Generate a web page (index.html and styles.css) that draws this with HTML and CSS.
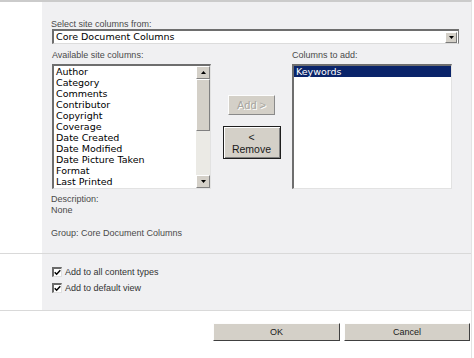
FILE: index.html
```html
<!DOCTYPE html>
<html>
<head>
<meta charset="utf-8">
<link rel="stylesheet" href="styles.css">
</head>
<body>
<div class="page">
  <div class="band band-main">
    <div class="gutter"></div>
    <div class="panel panel-main">
      <div class="label">Select site columns from:</div>
      <div class="select">
        <span class="select-text">Core Document Columns</span>
        <span class="drop"><svg width="5" height="3" viewBox="0 0 5 3"><path d="M0 0H5L2.5 3Z" fill="#000"/></svg></span>
      </div>
      <div class="picker">
        <div class="col">
          <div class="label">Available site columns:</div>
          <div class="listbox">
            <div class="items">
              <div class="item">Author</div>
              <div class="item">Category</div>
              <div class="item">Comments</div>
              <div class="item">Contributor</div>
              <div class="item">Copyright</div>
              <div class="item">Coverage</div>
              <div class="item">Date Created</div>
              <div class="item">Date Modified</div>
              <div class="item">Date Picture Taken</div>
              <div class="item">Format</div>
              <div class="item">Last Printed</div>
              <div class="item">Publisher</div>
            </div>
            <div class="scrollbar">
              <div class="sb-btn"><svg width="5" height="3" viewBox="0 0 5 3"><path d="M0 3H5L2.5 0Z" fill="#000"/></svg></div>
              <div class="sb-thumb"></div>
              <div class="sb-track"></div>
              <div class="sb-btn"><svg width="5" height="3" viewBox="0 0 5 3"><path d="M0 0H5L2.5 3Z" fill="#000"/></svg></div>
            </div>
          </div>
        </div>
        <div class="actions">
          <button class="btn btn-add" disabled>Add &gt;</button>
          <button class="btn btn-remove">&lt;<br>Remove</button>
        </div>
        <div class="col">
          <div class="label">Columns to add:</div>
          <div class="listbox listbox-right">
            <div class="items">
              <div class="item selected">Keywords</div>
            </div>
          </div>
        </div>
      </div>
      <div class="meta">Description:<br>None</div>
      <div class="meta meta-group">Group: Core Document Columns</div>
    </div>
  </div>
  <div class="sep"></div>
  <div class="band band-options">
    <div class="gutter"></div>
    <div class="panel panel-options">
      <div class="check"><span class="box"><svg width="8" height="7" viewBox="0 0 8 7"><path d="M0.8 3.2L3 5.5L7.2 1" fill="none" stroke="#000" stroke-width="1.7"/></svg></span>Add to all content types</div>
      <div class="check"><span class="box"><svg width="8" height="7" viewBox="0 0 8 7"><path d="M0.8 3.2L3 5.5L7.2 1" fill="none" stroke="#000" stroke-width="1.7"/></svg></span>Add to default view</div>
    </div>
  </div>
  <div class="sep"></div>
  <div class="footer">
    <button class="btn btn-wide">OK</button>
    <button class="btn btn-wide">Cancel</button>
  </div>
</div>
</body>
</html>
```
FILE: styles.css
```css
* { box-sizing: border-box; }
body {
  margin: 0;
  background: #fff;
  font-family: "Liberation Sans", Arial, sans-serif;
}
.page {
  width: 472px;
  height: 358px;
  border-top: 2px solid #cbcbcb;
  border-right: 1px solid #e3e3e3;
}
.band { display: flex; }
.band-main { height: 251px; }
.band-options { height: 56px; }
.gutter { width: 42px; flex: none; }
.panel { flex: 1; background: #f0f0f2; }
.sep { height: 1px; background: #d9d9d9; }

.panel-main { padding: 17px 0 0 9px; }
.label {
  font-size: 9px;
  line-height: 10px;
  color: #4a4a4a;
  white-space: nowrap;
}
.select {
  margin-left: 1px;
  width: 407px;
  height: 15px;
  background: #fff;
  border-top: 2px solid #6e6e6e;
  border-left: 2px solid #6e6e6e;
  border-right: 1px solid #7c7c7c;
  border-bottom: 1px solid #dcdcdc;
  display: flex;
  align-items: center;
  justify-content: space-between;
  padding: 0 0 0 2px;
}
.select-text {
  font-family: "DejaVu Sans", Verdana, sans-serif;
  font-size: 9.5px;
  line-height: 12px;
  color: #000;
}
.drop {
  width: 12px;
  height: 11px;
  background: #d4d0c8;
  border-top: 1px solid #fff;
  border-left: 1px solid #fff;
  border-right: 1px solid #7a7a7a;
  border-bottom: 1px solid #7a7a7a;
  display: flex;
  align-items: center;
  justify-content: center;
  margin-right: 1px;
}
.drop svg { display: block; }

.picker {
  margin-top: 6px;
  margin-left: 1px;
  display: grid;
  grid-template-columns: 159px 81px 160px;
}
.col .label { margin-bottom: 4px; }
.listbox {
  height: 125px;
  background: #fff;
  border-top: 2px solid #6e6e6e;
  border-left: 2px solid #6e6e6e;
  border-right: 1px solid #e2e2e2;
  border-bottom: 1px solid #e2e2e2;
  display: flex;
  overflow: hidden;
}
.items {
  flex: 1;
  overflow: hidden;
  font-family: "DejaVu Sans", Verdana, sans-serif;
  font-size: 9.5px;
  line-height: 11px;
  color: #000;
}
.item { padding-left: 2px; white-space: nowrap; }
.listbox-right .items { padding-top: 0; }
.item.selected {
  background: #0a246a;
  color: #fff;
}
.scrollbar {
  width: 14px;
  flex: none;
  display: flex;
  flex-direction: column;
  background: #ebeae5;
}
.sb-btn, .sb-thumb {
  background: #d4d0c8;
  border-top: 1px solid #fff;
  border-left: 1px solid #fff;
  border-right: 1px solid #808080;
  border-bottom: 1px solid #808080;
}
.sb-btn {
  height: 13px;
  flex: none;
  display: flex;
  align-items: center;
  justify-content: center;
}
.sb-btn svg { display: block; }
.sb-thumb { height: 52px; flex: none; }
.sb-track { flex: 1; }

.actions {
  display: flex;
  flex-direction: column;
  align-items: center;
  padding-top: 45px;
  gap: 11px;
}
.btn {
  font-family: "Liberation Sans", Arial, sans-serif;
  background: #d4d0c8;
  border-top: 1px solid #fdfdfd;
  border-left: 1px solid #fdfdfd;
  border-right: 1px solid #404040;
  border-bottom: 1px solid #404040;
  padding: 0;
  margin: 0;
  color: #1a1a1a;
  border-radius: 0;
}
.btn-add {
  width: 47px;
  height: 20px;
  font-size: 11px;
  color: #a8a6a0;
  text-shadow: 1px 1px 0 #fff;
  border-right-color: #8a8a8a;
  border-bottom-color: #8a8a8a;
}
.btn-remove {
  width: 58px;
  height: 33px;
  font-size: 10.5px;
  line-height: 12px;
  border: 1px solid #1e1e1e;
  box-shadow: inset 1px 1px 0 #fff, inset -1px -1px 0 #808080;
}

.meta {
  margin-top: 5px;
  font-size: 9px;
  line-height: 11px;
  color: #4a4a4a;
}
.meta-group { margin-top: 12px; }

.panel-options {
  padding: 10px 0 0 10px;
}
.check {
  display: flex;
  align-items: center;
  height: 16px;
  font-size: 9px;
  color: #333;
}
.box {
  width: 10px;
  height: 10px;
  margin-right: 3px;
  background: #fff;
  border-top: 2px solid #6a6a6a;
  border-left: 2px solid #6a6a6a;
  border-right: 1px solid #e0e0e0;
  border-bottom: 1px solid #e0e0e0;
  display: flex;
  align-items: center;
  justify-content: center;
}
.box svg { display: block; }

.footer {
  display: flex;
  justify-content: flex-end;
  gap: 4px;
  padding: 12px 1px 0 0;
}
.btn-wide {
  height: 18px;
  font-size: 9px;
}
.btn-wide:first-child { width: 127px; }
.btn-wide:last-child { width: 126px; }
```
